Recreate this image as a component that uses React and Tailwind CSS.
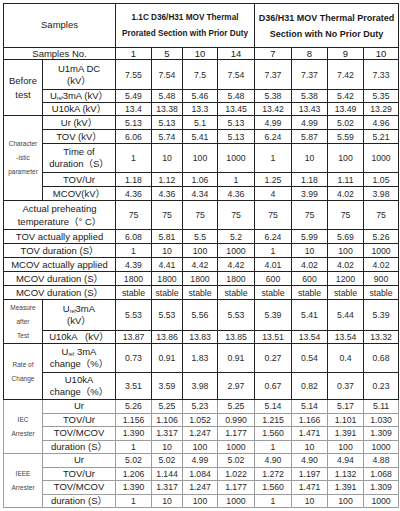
const cols = [39, 73, 36, 31, 35, 37, 37, 36, 36, 35];

const rows = [
  { h: 30, label: <>U1mA DC<br />(kV）</>, v: ["7.55", "7.54", "7.5", "7.54", "7.37", "7.37", "7.42", "7.33"] },
  { h: 12, label: <>U<Ref />3mA (kV）</>, v: ["5.49", "5.48", "5.46", "5.48", "5.38", "5.38", "5.42", "5.35"] },
  { h: 12, label: "U10kA (kV）", v: ["13.4", "13.38", "13.3", "13.45", "13.42", "13.43", "13.49", "13.29"] },
  { h: 14, label: "Ur (kV）", v: ["5.13", "5.13", "5.1", "5.13", "4.99", "4.99", "5.02", "4.96"] },
  { h: 14, label: "TOV (kV）", v: ["6.06", "5.74", "5.41", "5.13", "6.24", "5.87", "5.59", "5.21"] },
  { h: 29, label: <>Time of<br />duration（S）</>, v: ["1", "10", "100", "1000", "1", "10", "100", "1000"] },
  { h: 14, label: "TOV/Ur", v: ["1.18", "1.12", "1.06", "1", "1.25", "1.18", "1.11", "1.05"] },
  { h: 14, label: "MCOV(kV）", v: ["4.36", "4.36", "4.34", "4.36", "4", "3.99", "4.02", "3.98"] },
  { h: 29, span: <>Actual preheating<br />temperature（° C）</>, v: ["75", "75", "75", "75", "75", "75", "75", "75"] },
  { h: 14, span: "TOV actually applied", v: ["6.08", "5.81", "5.5", "5.2", "6.24", "5.99", "5.69", "5.26"] },
  { h: 13, span: "TOV duration (S）", v: ["1", "10", "100", "1000", "1", "10", "100", "1000"] },
  { h: 14, span: "MCOV actually applied", v: ["4.39", "4.41", "4.42", "4.42", "4.01", "4.02", "4.02", "4.02"] },
  { h: 14, span: "MCOV duration (S）", v: ["1800", "1800", "1800", "1800", "600", "600", "1200", "900"] },
  { h: 14, span: "MCOV duration (S）", v: ["stable", "stable", "stable", "stable", "stable", "stable", "stable", "stable"] },
  { h: 31, label: <>U<Ref />3mA<br />(kV）</>, v: ["5.53", "5.53", "5.56", "5.53", "5.39", "5.41", "5.44", "5.39"] },
  { h: 13, label: <span className="whitespace-pre">U10kA   (kV）</span>, v: ["13.87", "13.86", "13.83", "13.85", "13.51", "13.54", "13.54", "13.32"] },
  { h: 29, label: <>U<Ref /> 3mA<br />change（%）</>, v: ["0.73", "0.91", "1.83", "0.91", "0.27", "0.54", "0.4", "0.68"] },
  { h: 27, label: <>U10kA<br />change（%）</>, v: ["3.51", "3.59", "3.98", "2.97", "0.67", "0.82", "0.37", "0.23"] },
  { h: 13.5, label: "Ur", light: true, v: ["5.26", "5.25", "5.23", "5.25", "5.14", "5.14", "5.17", "5.11"] },
  { h: 13.5, label: "TOV/Ur", light: true, v: ["1.156", "1.106", "1.052", "0.990", "1.215", "1.166", "1.101", "1.030"] },
  { h: 13.5, label: "TOV/MCOV", light: true, v: ["1.390", "1.317", "1.247", "1.177", "1.560", "1.471", "1.391", "1.309"] },
  { h: 13.5, label: "duration (S）", light: true, v: ["1", "10", "100", "1000", "1", "10", "100", "1000"] },
  { h: 13.5, label: "Ur", light: true, v: ["5.02", "5.02", "4.99", "5.02", "4.90", "4.90", "4.94", "4.88"] },
  { h: 13.5, label: "TOV/Ur", light: true, v: ["1.206", "1.144", "1.084", "1.022", "1.272", "1.197", "1.132", "1.068"] },
  { h: 13.5, label: "TOV/MCOV", light: true, v: ["1.390", "1.317", "1.247", "1.177", "1.560", "1.471", "1.391", "1.309"] },
  { h: 13.5, label: "duration (S）", light: true, v: ["1", "10", "100", "1000", "1", "10", "100", "1000"] },
];

// group cells in the first column, keyed by the row they start on
const groups = {
  0: { span: 3, big: true, text: <>Before<br />test</> },
  3: { span: 5, text: <>Character<br />-istic<br />parameter</> },
  14: { span: 2, text: <>Measure<br />after<br />Test</> },
  16: { span: 2, text: <>Rate of<br />Change</> },
  18: { span: 4, light: true, text: <>IEC<br />Arrester</> },
  22: { span: 4, light: true, text: <>IEEE<br />Arrester</> },
};

function Ref() {
  return <span className="text-[5px] leading-none align-[-1px]">ref</span>;
}

const dark = "border border-[#222] p-0";
const gray = "border border-[#9c9c9c] p-0";

export default function App() {
  return (
    <div className="w-[400px] h-[511px] bg-white pl-[3px] pt-[3px] font-['Liberation_Sans',Arial,'Noto_Sans_CJK_SC',sans-serif] text-[#1a1a1a]">
      <table className="table-fixed border-collapse w-[395px]">
        <colgroup>
          {cols.map((w, i) => (
            <col key={i} style={{ width: w }} />
          ))}
        </colgroup>
        <tbody>
          <tr className="h-[44px]">
            <td colSpan={2} className={`${dark} text-center text-[9.5px]`}>Samples</td>
            <td colSpan={4} className={`${dark} text-center font-bold text-[8.2px] leading-[16px]`}>
              1.1C D36/H31 MOV Thermal
              <br />
              Prorated Section with Prior Duty
            </td>
            <td colSpan={4} className={`${dark} text-center font-bold text-[9px] leading-[16px]`}>
              D36/H31 MOV Thermal Prorated
              <br />
              Section with No Prior Duty
            </td>
          </tr>
          <tr className="h-[12px]">
            <td colSpan={2} className={`${dark} text-center text-[9.5px] leading-[10px]`}>Samples No.</td>
            {["1", "5", "10", "14", "7", "8", "9", "10"].map((n, i) => (
              <td key={i} className={`${dark} text-center text-[9.5px] leading-[10px]`}>{n}</td>
            ))}
          </tr>
          {rows.map((r, i) => {
            const g = groups[i];
            const b = r.light ? gray : dark;
            return (
              <tr key={i} style={{ height: r.h }}>
                {g && (
                  <td
                    rowSpan={g.span}
                    className={`${g.light ? gray : dark} text-center align-middle ${
                      g.big ? "text-[9.5px] leading-[14px]" : "text-[6.5px] leading-[14px] text-[#444]"
                    }`}
                  >
                    {g.text}
                  </td>
                )}
                {r.span ? (
                  <td colSpan={2} className={`${b} text-center text-[9.5px] leading-[13px]`}>{r.span}</td>
                ) : (
                  <td className={`${b} text-center text-[9.5px] leading-[12px]`}>{r.label}</td>
                )}
                {r.v.map((x, j) => (
                  <td key={j} className={`${b} text-center text-[8.7px] leading-[10px] text-[#2a2a2a]`}>{x}</td>
                ))}
              </tr>
            );
          })}
        </tbody>
      </table>
    </div>
  );
}
